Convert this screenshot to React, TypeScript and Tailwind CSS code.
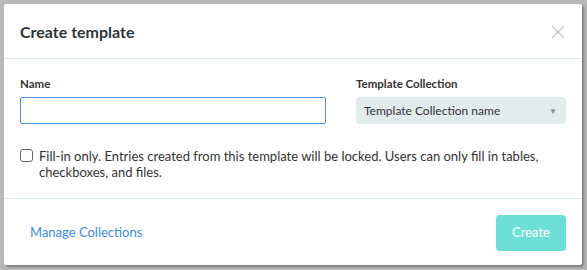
import React from "react";

export default function App() {
  return (
    <div
      className="w-[587px] h-[270px] bg-[#b9b9b9] pt-[4px] pl-[4px] overflow-hidden"
      style={{ fontFamily: "Lato, 'Open Sans', sans-serif" }}
    >
      <div className="w-[578px] h-[261px] bg-white rounded-[2px] shadow-[2px_2px_3px_rgba(0,0,0,0.35)] flex flex-col">
        <div className="h-[55px] border-b border-[#dcecec] flex items-center justify-between pl-[16px] pr-[17px] shrink-0">
          <h1 className="text-[16px] font-bold text-[#2d3436] mt-[2px]">Create template</h1>
          <svg width="14" height="14" viewBox="0 0 14 14" className="mt-[2px]">
            <path d="M1 1L13 13M13 1L1 13" stroke="#c8c8c8" strokeWidth="1.3" />
          </svg>
        </div>
        <div className="h-[140px] border-b border-[#dcecec] px-[16px] pt-[18px] shrink-0">
          <div className="flex gap-[30px]">
            <div className="w-[306px]">
              <div className="text-[11.5px] font-bold text-[#333] leading-[14px] mb-[6px]">Name</div>
              <input className="w-[306px] h-[27px] border border-[#4a90e2] rounded-[2px] outline-none px-2 text-[12px]" />
            </div>
            <div className="w-[210px]">
              <div className="text-[11.5px] font-bold text-[#333] leading-[14px] mb-[6px]">Template Collection</div>
              <div className="w-[210px] h-[27px] bg-[#e1eced] rounded-[4px] flex items-center justify-between pl-[8px] pr-[9px]">
                <span className="text-[12px] text-[#333]">Template Collection name</span>
                <span className="text-[8px] text-[#888]">▼</span>
              </div>
            </div>
          </div>
          <div className="flex items-start mt-[24px]">
            <div className="w-[13px] h-[13px] border border-[#666] rounded-[3px] shrink-0 mt-[1px]" />
            <p className="ml-[6px] text-[13px] leading-[16px] text-[#333] w-[515px]">
              Fill-in only. Entries created from this template will be locked. Users can only fill in tables,
              checkboxes, and files.
            </p>
          </div>
        </div>
        <div className="flex-1 flex items-center justify-between pl-[26px] pr-[16px]">
          <a className="text-[13px] text-[#3b8beb] mt-[2px]">Manage Collections</a>
          <button className="w-[70px] h-[36px] bg-[#6ce0d4] rounded-[4px] text-white text-[13px] mt-[1px]">Create</button>
        </div>
      </div>
    </div>
  );
}
